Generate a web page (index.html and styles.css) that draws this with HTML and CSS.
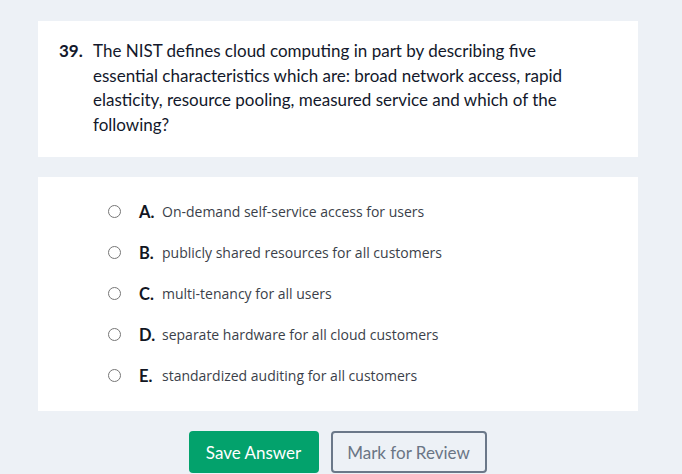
FILE: index.html
```html
<!DOCTYPE html>
<html>
<head>
<title>Question 39</title>
<link rel="stylesheet" href="styles.css">
</head>
<body>

<div class="quiz">
  <!-- Question -->
  <div class="card question">
    <span class="q-num">39.</span>
    <p class="q-text">The NIST defines cloud computing in part by describing five essential characteristics which are: broad network access, rapid elasticity, resource pooling, measured service and which of the following?</p>
  </div>

  <!-- Answer choices -->
  <div class="card choices">
    <label class="choice"><input type="radio" name="answer"><b>A.</b><span>On-demand self-service access for users</span></label>
    <label class="choice"><input type="radio" name="answer"><b>B.</b><span>publicly shared resources for all customers</span></label>
    <label class="choice"><input type="radio" name="answer"><b>C.</b><span>multi-tenancy for all users</span></label>
    <label class="choice"><input type="radio" name="answer"><b>D.</b><span>separate hardware for all cloud customers</span></label>
    <label class="choice"><input type="radio" name="answer"><b>E.</b><span>standardized auditing for all customers</span></label>
  </div>

  <!-- Actions -->
  <div class="actions">
    <button class="btn btn-save">Save Answer</button>
    <button class="btn btn-review">Mark for Review</button>
  </div>
</div>

</body>
</html>
```

FILE: styles.css
```css
/* Page background */
body {
  margin: 0;
  background: #edf1f6;
  font-family: 'Lato', sans-serif;
  color: #13182b;
}

.quiz {
  width: 600px;
  margin-left: 38px;
  padding-top: 21px;
}

/* White panels */
.card {
  background: #fff;
}

.question {
  display: flex;
  padding: 18px 21px 20px;
}

.q-num {
  font-weight: 700;
  font-size: 17px;
  line-height: 24.5px;
  width: 34px;
  flex-shrink: 0;
}

.q-text {
  margin: 0;
  max-width: 480px;
  font-size: 17px;
  line-height: 24.5px;
}

/* Answer list */
.choices {
  margin-top: 20px;
  padding: 14px 0 15px 69px;
  display: flex;
  flex-direction: column;
}

.choice {
  display: flex;
  align-items: center;
  height: 41px;
  font-family: 'Open Sans', sans-serif;
  font-size: 14px;
  color: #3b3f4a;
}

.choice input {
  width: 13px;
  height: 13px;
  margin: 0 18px 0 1px;
  accent-color: #888;
}

.choice b {
  font-family: 'Lato', sans-serif;
  font-size: 16.5px;
  color: #121622;
  width: 23px;
}

/* Buttons */
.actions {
  display: flex;
  justify-content: center;
  gap: 12px;
  margin-top: 20px;
  padding-right: 1px;
}

.btn {
  height: 42px;
  border-radius: 4px;
  font-family: 'Lato', sans-serif;
  font-size: 17px;
  cursor: pointer;
}

.btn-save {
  width: 130px;
  background: #03a26c;
  color: #fff;
  border: none;
}

.btn-review {
  width: 156px;
  background: transparent;
  color: #6a7585;
  border: 2px solid #6b7889;
}
```
